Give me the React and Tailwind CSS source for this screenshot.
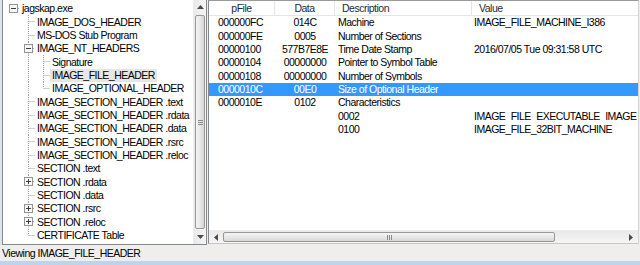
import React from "react";

const TREE = [
  { label: "jagskap.exe", cells: ["root"] },
  { label: "IMAGE_DOS_HEADER", cells: ["none", "T"] },
  { label: "MS-DOS Stub Program", cells: ["none", "T"] },
  { label: "IMAGE_NT_HEADERS", cells: ["none", "Tminus"] },
  { label: "Signature", cells: ["none", "I", "T"] },
  { label: "IMAGE_FILE_HEADER", cells: ["none", "I", "T"], selected: true },
  { label: "IMAGE_OPTIONAL_HEADER", cells: ["none", "I", "L"] },
  { label: "IMAGE_SECTION_HEADER .text", cells: ["none", "T"] },
  { label: "IMAGE_SECTION_HEADER .rdata", cells: ["none", "T"] },
  { label: "IMAGE_SECTION_HEADER .data", cells: ["none", "T"] },
  { label: "IMAGE_SECTION_HEADER .rsrc", cells: ["none", "T"] },
  { label: "IMAGE_SECTION_HEADER .reloc", cells: ["none", "T"] },
  { label: "SECTION .text", cells: ["none", "T"] },
  { label: "SECTION .rdata", cells: ["none", "Tplus"] },
  { label: "SECTION .data", cells: ["none", "T"] },
  { label: "SECTION .rsrc", cells: ["none", "Tplus"] },
  { label: "SECTION .reloc", cells: ["none", "Tplus"] },
  { label: "CERTIFICATE Table", cells: ["none", "L"] },
];

const ROWS = [
  ["000000FC", "014C", "Machine", "IMAGE_FILE_MACHINE_I386"],
  ["000000FE", "0005", "Number of Sections", ""],
  ["00000100", "577B7E8E", "Time Date Stamp", "2016/07/05 Tue 09:31:58 UTC"],
  ["00000104", "00000000", "Pointer to Symbol Table", ""],
  ["00000108", "00000000", "Number of Symbols", ""],
  ["0000010C", "00E0", "Size of Optional Header", "", true],
  ["0000010E", "0102", "Characteristics", ""],
  ["", "", "0002", "IMAGE_FILE_EXECUTABLE_IMAGE"],
  ["", "", "0100", "IMAGE_FILE_32BIT_MACHINE"],
];

const H = 13.333;
const LINE = "#a0a0a0";

function Cell({ kind }) {
  const cx = 8.5;
  const cy = 6.5;
  const hasBox = kind === "root" || kind === "Tminus" || kind === "Tplus";
  const plus = kind === "Tplus";
  return (
    <svg width="15" height={H} viewBox={`0 0 15 ${H}`} className="shrink-0 block">
      {(kind === "T" || kind === "I") && (
        <line x1={cx} y1="0" x2={cx} y2={H} stroke={LINE} strokeDasharray="1 1" />
      )}
      {kind === "L" && (
        <line x1={cx} y1="0" x2={cx} y2={cy} stroke={LINE} strokeDasharray="1 1" />
      )}
      {(kind === "Tminus" || kind === "Tplus") && (
        <>
          <line x1={cx} y1="0" x2={cx} y2="2.5" stroke={LINE} strokeDasharray="1 1" />
          <line x1={cx} y1="10.5" x2={cx} y2={H} stroke={LINE} strokeDasharray="1 1" />
        </>
      )}
      {(kind === "T" || kind === "L") && (
        <line x1={cx + 1} y1={cy} x2="15" y2={cy} stroke={LINE} strokeDasharray="1 1" />
      )}
      {hasBox && (
        <>
          <line x1="13" y1={cy} x2="15" y2={cy} stroke={LINE} strokeDasharray="1 1" />
          <rect x="4.5" y="2.5" width="8" height="8" fill="#f7f7f7" stroke="#939393" />
          <line x1="6" y1={cy} x2="11" y2={cy} stroke="#3a3a3a" />
          {plus && <line x1={cx} y1="4" x2={cx} y2="9" stroke="#3a3a3a" />}
        </>
      )}
    </svg>
  );
}

function Tri({ dir }) {
  const pts = {
    up: "0,4 3.5,0 7,4",
    down: "0,0 3.5,4 7,0",
    left: "4,0 0,3.5 4,7",
    right: "0,0 4,3.5 0,7",
  }[dir];
  const w = dir === "up" || dir === "down" ? 7 : 4;
  const h = dir === "up" || dir === "down" ? 4 : 7;
  return (
    <svg width={w} height={h} viewBox={`0 0 ${w} ${h}`} className="block">
      <polygon points={pts} fill="#4a4a4a" />
    </svg>
  );
}

function VScroll() {
  return (
    <div className="w-[13px] h-full flex flex-col bg-gradient-to-r from-[#e9e9e9] to-[#f5f5f5] border-l border-[#ececec]">
      <div className="h-[14px] flex items-center justify-center shrink-0">
        <Tri dir="up" />
      </div>
      <div className="flex-1 px-[1px] py-[1px]">
        <div className="h-full rounded-[2px] border border-[#979797] bg-gradient-to-r from-[#f4f4f4] via-[#e8e8e8] to-[#d6d6d6] flex items-center justify-center">
          <div className="flex flex-col gap-[1px]">
            <div className="w-[5px] h-[1px] bg-[#8a8a8a]" />
            <div className="w-[5px] h-[1px] bg-[#8a8a8a]" />
            <div className="w-[5px] h-[1px] bg-[#8a8a8a]" />
          </div>
        </div>
      </div>
      <div className="h-[14px] flex items-center justify-center shrink-0">
        <Tri dir="down" />
      </div>
    </div>
  );
}

function HScroll() {
  return (
    <div className="h-[13px] w-full flex bg-gradient-to-b from-[#e9e9e9] to-[#f5f5f5] border-t border-[#ececec] shrink-0">
      <div className="w-[14px] flex items-center justify-center shrink-0">
        <Tri dir="left" />
      </div>
      <div className="w-[332px] py-[1px]">
        <div className="h-full rounded-[2px] border border-[#979797] bg-gradient-to-b from-[#f4f4f4] via-[#e8e8e8] to-[#d6d6d6] flex items-center justify-center">
          <div className="flex gap-[1px]">
            <div className="w-[1px] h-[5px] bg-[#8a8a8a]" />
            <div className="w-[1px] h-[5px] bg-[#8a8a8a]" />
            <div className="w-[1px] h-[5px] bg-[#8a8a8a]" />
          </div>
        </div>
      </div>
      <div className="flex-1" />
      <div className="w-[14px] flex items-center justify-center shrink-0">
        <Tri dir="right" />
      </div>
    </div>
  );
}

export default function App() {
  return (
    <div className="w-[640px] h-[265px] overflow-hidden bg-[#f0eeed] flex flex-col font-['Liberation_Sans',Arial,sans-serif] text-[10.5px] tracking-[-0.5px] text-black leading-none">
      <div className="h-[245px] flex shrink-0">
        <div className="w-[2px] bg-[#dde4ec]" />
        {/* Left tree pane */}
        <div className="w-[205px] h-[245px] border-l border-r border-b border-[#828790] bg-white flex">
          <div className="flex-1 pl-[2px] pt-[2px] overflow-hidden">
            {TREE.map((r, i) => (
              <div key={i} className="flex items-center h-[13.333px]">
                {r.cells.map((c, j) => (
                  <Cell key={j} kind={c} />
                ))}
                <span
                  className={`px-[2px] h-[13.333px] flex items-center whitespace-nowrap ${
                    r.selected ? "bg-[#e6e6e6]" : ""
                  }`}
                >
                  {r.label}
                </span>
              </div>
            ))}
          </div>
          <VScroll />
        </div>
        <div className="w-[1px]" />
        {/* Right list pane */}
        <div className="w-[431px] h-[244px] border-l border-t border-b border-r border-l-[#828790] border-t-[#9a9a9a] border-b-[#c6c6c6] border-r-[#d4d4d4] bg-white flex flex-col">
          <div className="h-[15px] flex shrink-0 border-b border-[#e5e5e5] text-[#1e2a3a]">
            <div className="w-[66px] flex items-center justify-center border-r border-[#e5e5e5]">pFile</div>
            <div className="w-[60px] flex items-center justify-center border-r border-[#e5e5e5]">Data</div>
            <div className="w-[137px] flex items-center pl-[7px] border-r border-[#e5e5e5]">Description</div>
            <div className="flex-1 flex items-center pl-[7px]">Value</div>
          </div>
          <div className="flex-1 flex flex-col overflow-hidden">
            {ROWS.map((r, i) => (
              <div
                key={i}
                className={`flex h-[13.333px] shrink-0 items-center whitespace-nowrap ${
                  r[4] ? "bg-[#3399ff] text-white" : ""
                }`}
              >
                <div className="w-[66px] pl-[9px]">{r[0]}</div>
                <div className="w-[60px] text-center">{r[1]}</div>
                <div className="w-[137px] pl-[3px] overflow-hidden">{r[2]}</div>
                <div className="flex-1 pl-[2px] overflow-hidden">{r[3]}</div>
              </div>
            ))}
          </div>
          <HScroll />
        </div>
      </div>
      <div className="h-[16px] flex items-center pl-[2px] pt-[1px] shrink-0">Viewing IMAGE_FILE_HEADER</div>
      <div className="flex-1 bg-[#bcd4ee]" />
    </div>
  );
}
